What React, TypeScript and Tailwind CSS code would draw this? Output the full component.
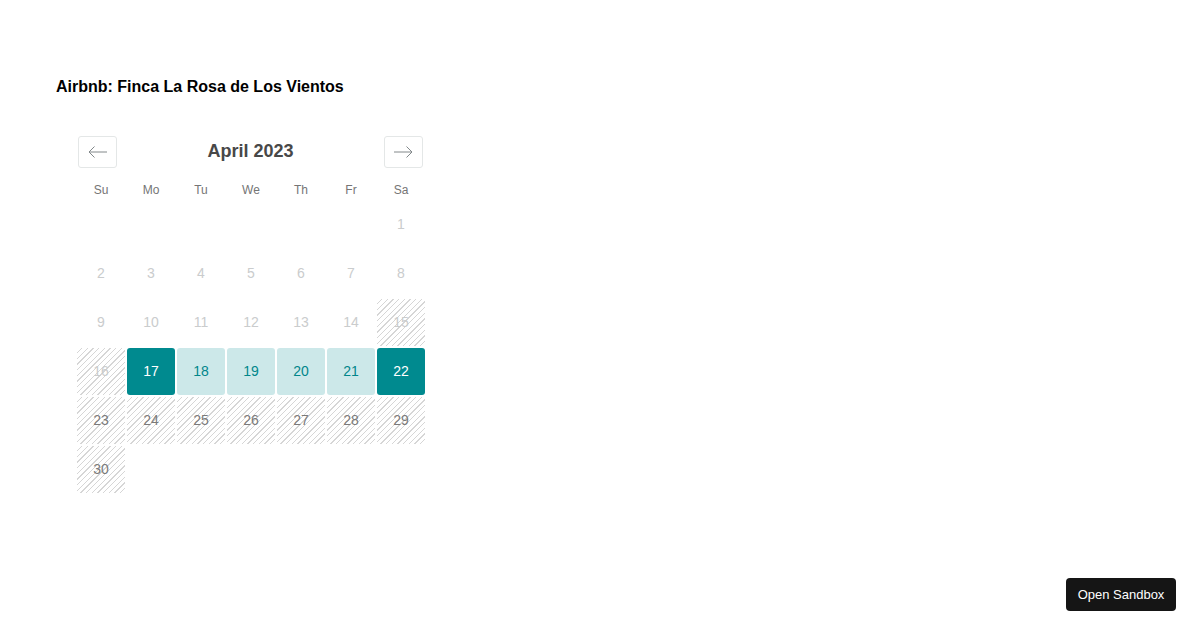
import React from 'react';

type DayKind = 'past' | 'blockedPast' | 'blocked' | 'edge' | 'span';

interface Day {
    n: number;
    kind: DayKind;
}

const weekdays = ['Su', 'Mo', 'Tu', 'We', 'Th', 'Fr', 'Sa'];

// April 2023 starts on a Saturday
const getKind = (n: number): DayKind => {
    if (n === 17 || n === 22) return 'edge';
    if (n >= 18 && n <= 21) return 'span';
    if (n === 15 || n === 16) return 'blockedPast';
    if (n >= 23) return 'blocked';
    return 'past';
};

const days: (Day | null)[] = [
    ...Array(6).fill(null),
    ...Array.from({ length: 30 }, (_, i) => ({ n: i + 1, kind: getKind(i + 1) })),
];

const hatch = 'bg-[repeating-linear-gradient(-45deg,#ffffff_0px,#ffffff_3px,#d6d6d6_3px,#d6d6d6_4px)]';

function DayCell({ day }: { day: Day | null }) {
    if (!day) return <div className="w-[48px] h-[47px]" />;

    const base = 'w-[48px] h-[47px] flex items-center justify-center text-[14px]';

    switch (day.kind) {
        case 'edge':
            return <div className={`${base} bg-[#008a8f] text-white rounded-[3px]`}>{day.n}</div>;
        case 'span':
            return <div className={`${base} bg-[#cce8e9] text-[#00868b] rounded-[3px]`}>{day.n}</div>;
        case 'blockedPast':
            return <div className={`${base} ${hatch} text-[#cacccd]`}>{day.n}</div>;
        case 'blocked':
            return <div className={`${base} ${hatch} text-[#7a7a7a]`}>{day.n}</div>;
        default:
            return <div className={`${base} text-[#cacccd]`}>{day.n}</div>;
    }
}

function NavButton({ dir }: { dir: 'left' | 'right' }) {
    return (
        <button className="w-[39px] h-[32px] border border-[#e4e7e7] rounded-[3px] bg-white flex items-center justify-center">
            <svg width="20" height="12" viewBox="0 0 20 12" fill="none" stroke="#82888a" strokeWidth="1">
                {dir === 'left' ? (
                    <>
                        <path d="M1 6h18" />
                        <path d="M6.5 0.5L1 6l5.5 5.5" />
                    </>
                ) : (
                    <>
                        <path d="M1 6h18" />
                        <path d="M13.5 0.5L19 6l-5.5 5.5" />
                    </>
                )}
            </svg>
        </button>
    );
}

export default function App() {
    return (
        <div className="relative w-[1200px] h-[630px] bg-white font-['Liberation_Sans',Arial,sans-serif]">
            <div className="pl-[56px] pt-[75px]">
                <h1 className="text-[16px] leading-6 font-bold text-black">Airbnb: Finca La Rosa de Los Vientos</h1>

                {/* Calendar */}
                <div className="ml-[21px] mt-[37px] w-[348px]">
                    <div className="flex items-center justify-between pl-[1px] pr-[2px]">
                        <NavButton dir="left" />
                        <div className="text-[18px] font-bold text-[#484848] pb-[2px]">April 2023</div>
                        <NavButton dir="right" />
                    </div>

                    <div className="mt-[12px] grid grid-cols-7 gap-x-[2px] h-5 items-center">
                        {weekdays.map(w => (
                            <div key={w} className="text-center text-[12px] text-[#757575]">{w}</div>
                        ))}
                    </div>

                    <div className="mt-[1px] grid grid-cols-[repeat(7,48px)] gap-x-[2px] gap-y-[2px]">
                        {days.map((d, i) => (
                            <DayCell key={i} day={d} />
                        ))}
                    </div>
                </div>
            </div>

            <button className="absolute right-[24px] bottom-[19px] w-[110px] h-[33px] rounded-[4px] bg-[#151515] text-white text-[13px] flex items-center justify-center">
                Open Sandbox
            </button>
        </div>
    );
}
